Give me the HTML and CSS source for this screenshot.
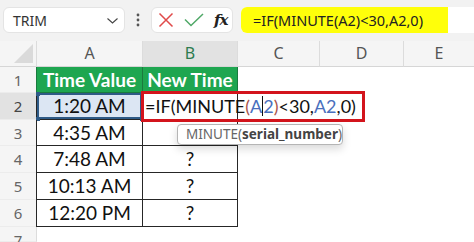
FILE: index.html
```html
<!DOCTYPE html>
<html lang="en">
<head>
  <meta charset="UTF-8">
  <title>MINUTE formula</title>
  <link rel="stylesheet" href="styles.css">
</head>
<body>
  <div class="app">
    <div class="toolbar">
      <div class="namebox">
        <span>TRIM</span>
        <svg class="chev" width="11" height="6" viewBox="0 0 11 6"><path d="M0.5 0.5 L5.5 5 L10.5 0.5" fill="none" stroke="#444" stroke-width="1.1"/></svg>
      </div>
      <svg class="grip" width="4" height="14" viewBox="0 0 4 14"><circle cx="2" cy="2" r="1.4" fill="#555"/><circle cx="2" cy="7" r="1.4" fill="#555"/><circle cx="2" cy="12" r="1.4" fill="#555"/></svg>
      <div class="actions">
        <svg width="16" height="16" viewBox="0 0 16 16"><path d="M1.5 1.5 L14.5 14.5 M14.5 1.5 L1.5 14.5" stroke="#e04a4a" stroke-width="1.5" fill="none"/></svg>
        <svg width="20" height="14" viewBox="0 0 20 14"><path d="M1 6.5 L7 12.5 L19 1" stroke="#4fa867" stroke-width="1.5" fill="none"/></svg>
        <span class="fx">fx</span>
      </div>
      <div class="fbar">
        <div class="fbar-fill">=IF(MINUTE(A2)&lt;30,A2,0)</div>
      </div>
    </div>

    <div class="sheet">
      <div class="hd corner"><span class="tri"></span></div>
      <div class="hd">A</div>
      <div class="hd sel">B</div>
      <div class="hd">C</div>
      <div class="hd">D</div>
      <div class="hd last">E</div>

      <div class="rh">1</div>
      <div class="c head first">Time Value</div>
      <div class="c head">New Time</div>
      <div></div><div></div><div></div>

      <div class="rh sel">2</div>
      <div class="c first ref">1:20 AM
        <i class="h tl"></i><i class="h tr"></i><i class="h bl"></i><i class="h br"></i>
      </div>
      <div class="c edit">
        <span class="formula">=IF(MINUTE<span class="pr">(</span><span class="rf">A</span><span class="caret"></span><span class="rf">2</span><span class="pr">)</span>&lt;30,<span class="rf">A2</span>,0)</span>
        <div class="mark"></div>
        <div class="tip">MINUTE(<b>serial_number</b>)</div>
      </div>
      <div></div><div></div><div></div>

      <div class="rh">3</div>
      <div class="c first">4:35 AM</div>
      <div class="c"></div>
      <div></div><div></div><div></div>

      <div class="rh">4</div>
      <div class="c first">7:48 AM</div>
      <div class="c">?</div>
      <div></div><div></div><div></div>

      <div class="rh">5</div>
      <div class="c first">10:13 AM</div>
      <div class="c">?</div>
      <div></div><div></div><div></div>

      <div class="rh">6</div>
      <div class="c first">12:20 PM</div>
      <div class="c">?</div>
      <div></div><div></div><div></div>

      <div class="rh">7</div>
      <div></div><div></div><div></div><div></div><div></div>
    </div>
  </div>
</body>
</html>
```

FILE: styles.css
```css
body {
  margin: 0;
  background: #ffffff;
  font-family: 'Lato', 'Noto Sans', sans-serif;
  overflow: hidden;
}

.app {
  width: 474px;
  height: 242px;
  overflow: hidden;
}

/* top bar */
.toolbar {
  display: flex;
  align-items: center;
  height: 41px;
  padding: 7px 0 8px 3px;
  box-sizing: border-box;
  background: #f2f2f2;
}

.namebox {
  width: 122px;
  height: 26px;
  box-sizing: border-box;
  background: #fff;
  border: 1px solid #e4e4e4;
  border-radius: 6px;
  display: flex;
  align-items: center;
  justify-content: space-between;
  padding: 0 6px 0 9px;
  font-family: 'Noto Sans', sans-serif;
  font-size: 14px;
  color: #333;
}

.chev {
  margin-top: 2px;
}

.grip {
  margin-left: 11px;
}

.actions {
  margin-left: 11px;
  width: 82px;
  height: 26px;
  box-sizing: border-box;
  background: #fff;
  border: 1px solid #e4e4e4;
  border-radius: 6px;
  display: flex;
  align-items: center;
  gap: 10px;
  padding-left: 6px;
}

.fx {
  font-family: 'DejaVu Serif', serif;
  font-style: italic;
  font-weight: bold;
  font-size: 15px;
  color: #222;
  letter-spacing: -1px;
}

.fbar {
  margin-left: 8px;
  flex: 1;
  height: 26px;
  background: #fff;
  border-radius: 6px 0 0 6px;
}

.fbar-fill {
  width: 207px;
  height: 26px;
  background: #ffff0a;
  border-radius: 6px 0 0 6px;
  padding-left: 12px;
  box-sizing: border-box;
  font-family: 'Noto Sans', sans-serif;
  font-size: 14.5px;
  line-height: 26px;
  color: #222;
}

/* grid */
.sheet {
  display: grid;
  grid-template-columns: 37px 106px 95px 82px 84px 70px;
  grid-template-rows: 26px 26px 27px 26px 27px 27px 27px 15px;
}

.hd {
  background: #f5f5f5;
  border-right: 1px solid #dcdcdc;
  border-bottom: 1px solid #d6d6d6;
  font-family: 'Noto Sans', sans-serif;
  font-size: 16px;
  color: #555;
  text-align: center;
  line-height: 25px;
}

.hd.sel {
  background: #e2e2e2;
  color: #2e7b4f;
}

.hd.last {
  border-right: none;
}

.corner {
  position: relative;
}

.tri {
  position: absolute;
  right: 3px;
  bottom: 3px;
  width: 0;
  height: 0;
  border-left: 19px solid transparent;
  border-bottom: 19px solid #dadada;
}

.rh {
  background: #f5f5f5;
  border-right: 1px solid #dcdcdc;
  border-bottom: 1px solid #ececec;
  font-family: 'Noto Sans', sans-serif;
  font-size: 15px;
  color: #666;
  text-align: center;
  line-height: 26px;
}

.rh.sel {
  background: #e2e2e2;
  color: #444;
}

.c {
  position: relative;
  border-right: 1px solid #262626;
  border-bottom: 1px solid #262626;
  font-size: 19px;
  color: #111;
  text-align: center;
  line-height: 26px;
  white-space: nowrap;
}

.c.first {
  border-left: 1px solid #262626;
  margin-left: -1px;
}

.c.head {
  background: #1ea650;
  color: #fff;
  font-weight: bold;
  border-color: #1a7a3e;
}

.c.ref {
  background: #dce6f3;
  box-shadow: inset 0 0 0 2px #2e5a86;
}

.h {
  position: absolute;
  width: 4px;
  height: 4px;
  background: #2e5a86;
}

.h.tl { left: -1px; top: -1px; }
.h.tr { right: -2px; top: -1px; }
.h.bl { left: -1px; bottom: -2px; }
.h.br { right: -2px; bottom: -2px; }

.c.edit {
  z-index: 2;
  text-align: left;
}

.formula {
  position: absolute;
  left: 2px;
  top: 0;
  font-size: 18px;
  color: #111;
}

.pr {
  color: #a9534a;
}

.rf {
  color: #4a6fbd;
}

.caret {
  display: inline-block;
  width: 1px;
  height: 20px;
  background: #111;
  vertical-align: -3px;
}

.mark {
  position: absolute;
  left: -2px;
  top: -2px;
  width: 224px;
  height: 31px;
  box-sizing: border-box;
  border: 3px solid #d3141c;
}

.tip {
  position: absolute;
  left: 34px;
  top: 31px;
  height: 21px;
  width: 166px;
  box-sizing: border-box;
  background: #fff;
  border: 1px solid #b5b5b5;
  border-radius: 4px;
  box-shadow: 0 4px 8px rgba(0, 0, 0, 0.15);
  font-family: 'Noto Sans', sans-serif;
  font-size: 13.5px;
  line-height: 19px;
  color: #666;
  padding-left: 8px;
}

.tip b {
  color: #444;
}
```
